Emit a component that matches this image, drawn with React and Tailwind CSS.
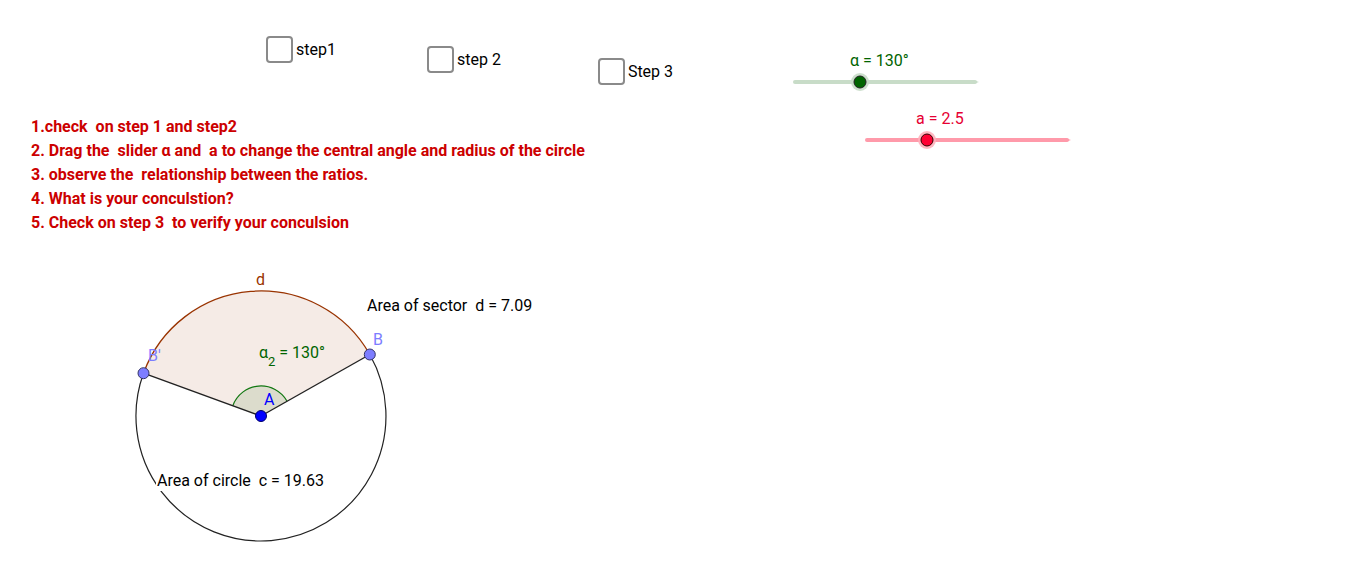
import React from "react";

const font = { fontFamily: "Roboto, 'Liberation Sans', sans-serif" };

function CheckBox({ label, className }) {
  return (
    <div className={`flex items-center ${className}`}>
      <div className="w-[27px] h-[27px] rounded-[4px] border-2 border-[#8a8a8a] bg-white" />
      <span className="ml-[3px] text-[16px] text-black leading-none">{label}</span>
    </div>
  );
}

const lines = [
  "1.check  on step 1 and step2",
  "2. Drag the  slider α and  a to change the central angle and radius of the circle",
  "3. observe the  relationship between the ratios.",
  "4. What is your conculstion?",
  "5. Check on step 3  to verify your conculsion",
];

export default function App() {
  const cx = 261, cy = 416, r = 125;
  const B = [369.8, 354.5];
  const Bp = [143.5, 373.2];
  return (
    <div className="relative w-[1357px] h-[568px] bg-white overflow-hidden select-none" style={font}>
      <svg className="absolute left-0 top-0" width="1357" height="568">
        {/* sector */}
        <path d={`M ${cx} ${cy} L ${B[0]} ${B[1]} A ${r} ${r} 0 0 0 ${Bp[0]} ${Bp[1]} Z`} fill="#f5ebe6" stroke="none" />
        <path d={`M ${B[0]} ${B[1]} A ${r} ${r} 0 0 0 ${Bp[0]} ${Bp[1]}`} fill="none" stroke="#993300" strokeWidth="1.3" />
        {/* rest of circle */}
        <path d={`M ${Bp[0]} ${Bp[1]} A ${r} ${r} 0 1 0 ${B[0]} ${B[1]}`} fill="none" stroke="#222" strokeWidth="1.2" />
        {/* angle */}
        <path d={`M ${cx} ${cy} L 287.1 401.2 A 30 30 0 0 0 232.8 405.7 Z`} fill="#dcdccc" stroke="none" />
        <path d={`M 287.1 401.2 A 30 30 0 0 0 232.8 405.7`} fill="none" stroke="#117711" strokeWidth="1.2" />
        {/* radii */}
        <line x1={cx} y1={cy} x2={B[0]} y2={B[1]} stroke="#222" strokeWidth="1.4" />
        <line x1={cx} y1={cy} x2={Bp[0]} y2={Bp[1]} stroke="#222" strokeWidth="1.4" />
        {/* points */}
        <circle cx={B[0]} cy={B[1]} r="5.5" fill="#7d7dff" stroke="#333366" strokeWidth="1" />
        <circle cx={Bp[0]} cy={Bp[1]} r="5.5" fill="#7d7dff" stroke="#333366" strokeWidth="1" />
        <circle cx={cx} cy={cy} r="5.5" fill="#0000ff" stroke="#000066" strokeWidth="1" />

        {/* green slider */}
        <line x1="795" y1="82" x2="975" y2="82" stroke="#c8dcc8" strokeWidth="4" strokeLinecap="round" />
        <path d="M 973 80 L 979 82 L 973 84 Z" fill="#c8dcc8" />
        <circle cx="860" cy="82" r="9" fill="#c8dcc8" opacity="0.9" />
        <circle cx="860" cy="82" r="6" fill="#006400" stroke="#222" strokeWidth="1" />

        {/* red slider */}
        <line x1="867" y1="140" x2="1067" y2="140" stroke="#ff9aaa" strokeWidth="4" strokeLinecap="round" />
        <path d="M 1065 138 L 1071 140 L 1065 142 Z" fill="#ff9aaa" />
        <circle cx="927" cy="140" r="9" fill="#ffb0bb" opacity="0.9" />
        <circle cx="927" cy="140" r="6" fill="#ff0033" stroke="#330000" strokeWidth="1" />
      </svg>

      {/* checkbox row */}
      <div className="absolute left-[266px] top-[36px] flex items-start">
        <CheckBox label="step1" />
        <CheckBox label="step 2" className="ml-[91px] mt-[10px]" />
        <CheckBox label="Step 3" className="ml-[97px] mt-[22px]" />
      </div>

      <div className="absolute left-[850px] top-[53px] text-[16px] leading-none text-[#006400]">α = 130°</div>
      <div className="absolute left-[916px] top-[111px] text-[16px] leading-none text-[#e60033]">a = 2.5</div>

      <div className="absolute left-[31px] top-[115px] flex flex-col">
        {lines.map((t) => (
          <div key={t} className="h-[24px] text-[16px] font-bold leading-[24px] text-[#cc0000] whitespace-pre">
            {t}
          </div>
        ))}
      </div>

      <div className="absolute left-[256px] top-[272px] text-[16px] leading-none text-[#993300]">d</div>
      <div className="absolute left-[367px] top-[298px] text-[16px] leading-none text-black whitespace-pre">Area of sector  d = 7.09</div>
      <div className="absolute left-[373px] top-[332px] text-[16px] leading-none text-[#7d7dff]">B</div>
      <div className="absolute left-[148px] top-[348px] text-[16px] leading-none text-[#7d7dff]">B'</div>
      <div className="absolute left-[259px] top-[345px] text-[16px] leading-none text-[#006400] whitespace-pre">
        α<sub className="text-[13px] align-[-5px]">2</sub> = 130°
      </div>
      <div className="absolute left-[264px] top-[392px] text-[16px] leading-none text-[#0000ff]">A</div>
      <div className="absolute left-[156px] top-[471px] bg-white px-[1px] text-[16px] leading-[20px] text-black whitespace-pre">Area of circle  c = 19.63</div>
    </div>
  );
}
